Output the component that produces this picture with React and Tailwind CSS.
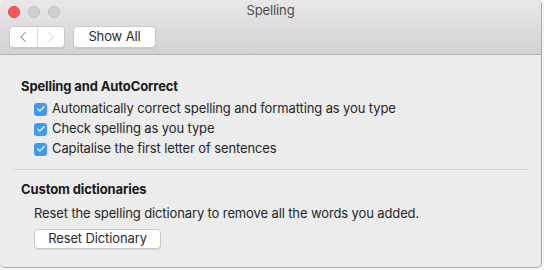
import { ChevronLeft, ChevronRight, Check } from 'lucide-react'

function Checkbox({ label }) {
	return (
		<div className="flex items-center h-[20px]">
			<span className="w-[13px] h-[13px] rounded-[3px] bg-[#3d9bf7] flex items-center justify-center">
				<Check className="w-[10px] h-[10px] text-white" strokeWidth={2.75} />
			</span>
			<span className="ml-[5px]">{label}</span>
		</div>
	)
}

function App() {
	return (
		<div className="w-[544px] h-[270px] bg-[#f4f4f4] text-[13px] tracking-[-0.12px] text-[#262626]" style={{ fontFamily: '"Inter", "Liberation Sans", sans-serif' }}>
			<div className="w-[542px] h-[268px] bg-[#ececec] rounded-[5px] border-r border-b border-[#a9a9a9] overflow-hidden flex flex-col">
				{/* title bar */}
				<div className="h-[55px] shrink-0 bg-gradient-to-b from-[#e9e7e9] to-[#d3d1d3] border-b border-[#b1b1b1] flex flex-col">
					<div className="relative h-[24px] flex items-center">
						<div className="flex gap-[8px] pl-[8px]">
							<span className="w-[12px] h-[12px] rounded-full bg-[#fc5753] border border-[#df4744]" />
							<span className="w-[12px] h-[12px] rounded-full bg-[#d0d0d0] border border-[#c0bfc0]" />
							<span className="w-[12px] h-[12px] rounded-full bg-[#d0d0d0] border border-[#c0bfc0]" />
						</div>
						<span className="absolute left-0 right-0 text-center text-[#4d4d4d] -mt-[2px]">Spelling</span>
					</div>
					<div className="flex items-center gap-[8px] pl-[9px] mt-[2px]">
						<div className="flex h-[22px] w-[56px] rounded-[4px] bg-white border border-[#c8c8c8] shadow-[0_1px_0_rgba(0,0,0,0.08)]">
							<span className="flex-1 flex items-center justify-center border-r border-[#dcdcdc]">
								<ChevronLeft className="w-[18px] h-[18px] text-[#6a6a6a]" strokeWidth={1.3} />
							</span>
							<span className="flex-1 flex items-center justify-center">
								<ChevronRight className="w-[18px] h-[18px] text-[#c6c6c6]" strokeWidth={1.3} />
							</span>
						</div>
						<div className="h-[22px] w-[83px] rounded-[4px] bg-white border border-[#c8c8c8] shadow-[0_1px_0_rgba(0,0,0,0.08)] flex items-center justify-center text-[#2a2a2a]">
							Show All
						</div>
					</div>
				</div>
				{/* content */}
				<div className="px-[13px] pt-[22px]">
					<div className="pl-[8px] font-bold text-[#1a1a1a] leading-[18px]">Spelling and AutoCorrect</div>
					<div className="pl-[21px] mt-[4px]">
						<Checkbox label="Automatically correct spelling and formatting as you type" />
						<Checkbox label="Check spelling as you type" />
						<Checkbox label="Capitalise the first letter of sentences" />
					</div>
					<div className="mt-[10px] border-t border-[#d6d6d6]" />
					<div className="pl-[8px] mt-[10px] font-bold text-[#1a1a1a] leading-[18px]">Custom dictionaries</div>
					<div className="pl-[21px] mt-[6px] leading-[18px]">Reset the spelling dictionary to remove all the words you added.</div>
					<div className="pl-[21px] mt-[7px]">
						<div className="h-[20px] w-[127px] rounded-[4px] bg-white border border-[#c8c8c8] shadow-[0_1px_0_rgba(0,0,0,0.08)] flex items-center justify-center text-[#2a2a2a]">
							Reset Dictionary
						</div>
					</div>
				</div>
			</div>
		</div>
	)
}

export default App
